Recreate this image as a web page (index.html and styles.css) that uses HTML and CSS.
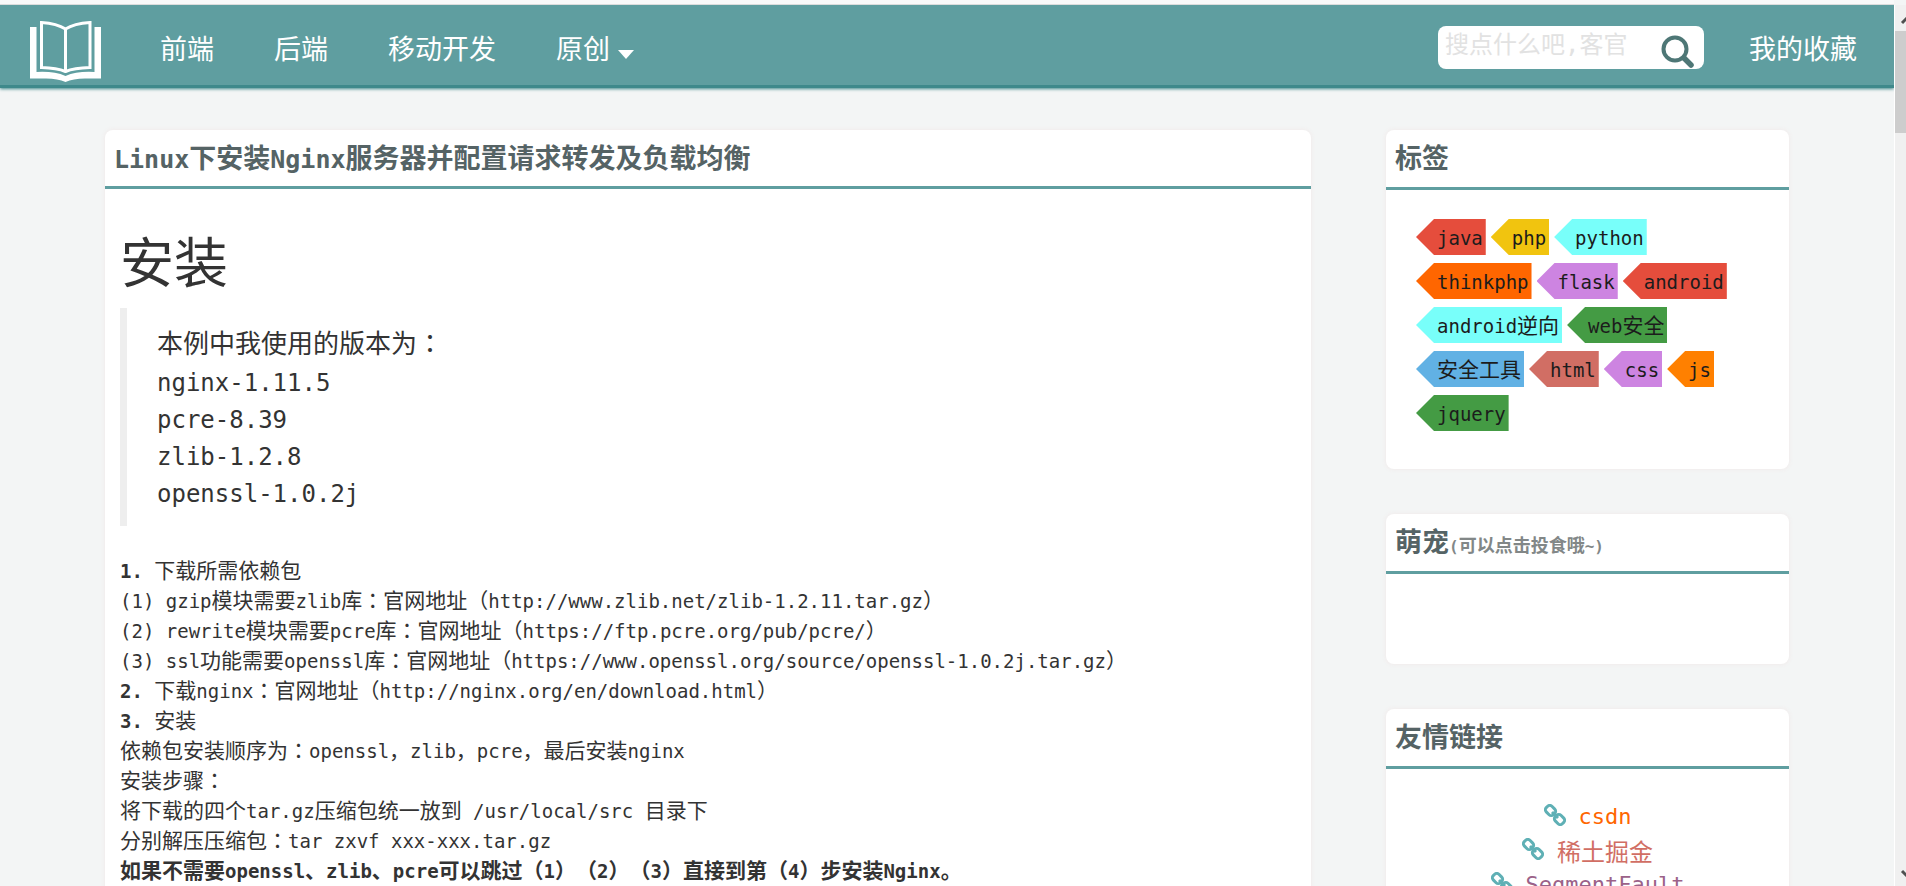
FILE: index.html
```html
<!DOCTYPE html>
<html lang="zh-CN">
<head>
<meta charset="utf-8">
<title>Linux下安装Nginx服务器并配置请求转发及负载均衡</title>
<link rel="stylesheet" href="styles.css">
</head>
<body>
<div class="page">
  <header class="topbar">
    <a class="logo" href="#" aria-label="首页">
      <svg viewBox="0 0 71 61" width="71" height="61" fill="none" stroke="#fff">
        <path d="M0 6H6.500V51Q24 50 35.500 55Q47 50 64.500 51V6H71V57.500H55Q43 57.500 35.500 61Q28 57.500 16 57.500H0Z" fill="#fff" stroke="none"/>
        <path d="M11.500 1.500Q27 2.500 35.500 8Q44 2.500 60 1.500V46.500Q44 47 35.500 50.500Q27 47 11.500 46.500ZM35.500 8V50" stroke-width="3"/>
      </svg>
    </a>
    <nav class="nav">
      <a href="#">前端</a>
      <a href="#">后端</a>
      <a href="#">移动开发</a>
      <a href="#" class="drop">原创<span class="caret"></span></a>
    </nav>
    <form class="search">
      <input type="text" aria-label="搜索" placeholder="搜点什么吧,客官">
      <button type="button" aria-label="搜索">
        <svg viewBox="0 0 34 34" width="34" height="34" fill="none" stroke="#4e7776" stroke-linecap="round"><circle cx="14" cy="14" r="11.500" stroke-width="4"/><path d="M23.500 23.500L30 30" stroke-width="5.500"/></svg>
      </button>
    </form>
    <a class="fav" href="#">我的收藏</a>
  </header>

  <div class="layout">
    <main class="card article">
      <h2 class="card-title"><span class="en">Linux</span>下安装<span class="en">Nginx</span>服务器并配置请求转发及负载均衡</h2>
      <div class="content">
        <h1>安装</h1>
        <blockquote>
          <p class="lead">本例中我使用的版本为<span class="pc">：</span></p>
          <p><span class="en">nginx-1.11.5</span></p>
          <p><span class="en">pcre-8.39</span></p>
          <p><span class="en">zlib-1.2.8</span></p>
          <p><span class="en">openssl-1.0.2j</span></p>
        </blockquote>
        <div class="steps">
          <p><b class="en">1. </b>下载所需依赖包</p>
          <p><span class="en">(1) gzip</span>模块需要<span class="en">zlib</span>库<span class="pc">：</span>官网地址<span class="pc">（</span><span class="en">http://www.zlib.net/zlib-1.2.11.tar.gz</span><span class="pc">）</span></p>
          <p><span class="en">(2) rewrite</span>模块需要<span class="en">pcre</span>库<span class="pc">：</span>官网地址<span class="pc">（</span><span class="en">https://ftp.pcre.org/pub/pcre/</span><span class="pc">）</span></p>
          <p><span class="en">(3) ssl</span>功能需要<span class="en">openssl</span>库<span class="pc">：</span>官网地址<span class="pc">（</span><span class="en">https://www.openssl.org/source/openssl-1.0.2j.tar.gz</span><span class="pc">）</span></p>
          <p><b class="en">2. </b>下载<span class="en">nginx</span><span class="pc">：</span>官网地址<span class="pc">（</span><span class="en">http://nginx.org/en/download.html</span><span class="pc">）</span></p>
          <p><b class="en">3. </b>安装</p>
          <p>依赖包安装顺序为<span class="pc">：</span><span class="en">openssl</span>，<span class="en">zlib</span>，<span class="en">pcre</span>，最后安装<span class="en">nginx</span></p>
          <p>安装步骤<span class="pc">：</span></p>
          <p>将下载的四个<span class="en">tar.gz</span>压缩包统一放到<span class="en"> /usr/local/src </span>目录下</p>
          <p>分别解压压缩包<span class="pc">：</span><span class="en">tar zxvf xxx-xxx.tar.gz</span></p>
          <p><strong>如果不需要<span class="en">openssl</span>、<span class="en">zlib</span>、<span class="en">pcre</span>可以跳过（<span class="en">1</span>）（<span class="en">2</span>）（<span class="en">3</span>）直接到第（<span class="en">4</span>）步安装<span class="en">Nginx</span>。</strong></p>
        </div>
      </div>
    </main>

    <aside class="sidebar">
      <section class="card">
        <h2 class="card-title">标签</h2>
        <div class="tags">
          <a href="#" class="tag red"><span class="en">java</span></a>
          <a href="#" class="tag yellow"><span class="en">php</span></a>
          <a href="#" class="tag cyan"><span class="en">python</span></a>
          <a href="#" class="tag orange"><span class="en">thinkphp</span></a>
          <a href="#" class="tag violet"><span class="en">flask</span></a>
          <a href="#" class="tag red"><span class="en">android</span></a>
          <a href="#" class="tag cyan"><span class="en">android</span>逆向</a>
          <a href="#" class="tag green"><span class="en">web</span>安全</a>
          <a href="#" class="tag blue">安全工具</a>
          <a href="#" class="tag rose"><span class="en">html</span></a>
          <a href="#" class="tag violet"><span class="en">css</span></a>
          <a href="#" class="tag amber"><span class="en">js</span></a>
          <a href="#" class="tag green"><span class="en">jquery</span></a>
        </div>
      </section>
      <section class="card">
        <h2 class="card-title">萌宠<small><span class="en">(</span>可以点击投食哦<span class="en">~)</span></small></h2>
        <div class="pet"></div>
      </section>
      <section class="card">
        <h2 class="card-title">友情链接</h2>
        <div class="links">
          <a href="#" class="c1"><svg class="chain" viewBox="0 0 22 22"><use href="#chain"/></svg><span class="en">csdn</span></a>
          <a href="#" class="c2"><svg class="chain" viewBox="0 0 22 22"><use href="#chain"/></svg>稀土掘金</a>
          <a href="#" class="c3"><svg class="chain" viewBox="0 0 22 22"><use href="#chain"/></svg><span class="en">SegmentFault</span></a>
        </div>
      </section>
    </aside>
  </div>
</div>
<div class="scrollbar" aria-hidden="true">
  <svg viewBox="0 0 11 26" width="11" height="26" fill="none" stroke="#505050" stroke-width="3"><path d="M7 18L12 13"/></svg>
  <div class="thumb"></div>
  <svg class="down" viewBox="0 0 11 26" width="11" height="26" fill="none" stroke="#505050" stroke-width="3"><path d="M7 11L12 16"/></svg>
</div>
<svg class="defs" aria-hidden="true"><symbol id="chain" viewBox="0 0 22 22"><g fill="none" stroke="#5fb0b5" stroke-width="3"><rect x="-5" y="-4" width="10" height="8" rx="3" transform="translate(6.500 6.500) rotate(45)"/><rect x="-5" y="-4" width="10" height="8" rx="3" transform="translate(15.500 15.500) rotate(45)"/><path d="M8 8L14 14"/></g></symbol></svg>
</body>
</html>
```

FILE: styles.css
```css
* { box-sizing: border-box; }
html { height: 100%; }
body {
  margin: 0;
  height: 100%;
  display: flex;
  overflow: hidden;
  background: #f3f5f5;
  color: #333;
  font-family: "Noto Sans CJK SC", sans-serif;
  font-size: 21px;
  line-height: 30px;
  text-spacing-trim: space-all;
}
a { text-decoration: none; color: inherit; }
h1, h2, p, blockquote { margin: 0; font-weight: normal; }
.en { font-family: "DejaVu Sans Mono", monospace; font-size: 19px; line-height: 1; white-space: pre-wrap; }
.pc { font-family: "Noto Sans CJK TC", sans-serif; font-feature-settings: "locl" 0; line-height: 1; }
.defs { position: absolute; width: 0; height: 0; }

.page { flex: 1; min-width: 0; height: 100%; overflow: hidden; border-top: 4px solid #f9f9f9; }

.topbar {
  display: flex;
  align-items: center;
  height: 84px;
  padding: 0 37px 0 30px;
  background: #5f9ea0;
  border-top: 1px solid #dcdcdc;
  border-bottom: 3px solid #3e898b;
  box-shadow: 0 1px 3px #3e898b;
  color: #fff;
  font-size: 27px;
  line-height: 40px;
}
.logo { display: flex; height: 80px; align-items: flex-start; padding-top: 16px; }
.nav { display: flex; gap: 60px; margin-left: 59px; padding-top: 6px; }
.drop { display: flex; align-items: center; gap: 8px; }
.caret { border: 8px solid transparent; border-top: 9px solid #fff; border-bottom: 0; margin-top: 13px; }
.search {
  display: flex;
  align-items: center;
  width: 266px;
  height: 43px;
  margin: 4px 45px 0 auto;
  padding: 0 9px 0 7px;
  background: #fff;
  border-radius: 8px;
}
.search input {
  flex: 1;
  min-width: 0;
  padding: 0 0 4px;
  border: 0;
  outline: 0;
  background: none;
  font: 24px "DejaVu Sans Mono", "Noto Sans CJK SC", sans-serif;
}
.search input::placeholder { color: #e2e2e2; opacity: 1; }
.search button { display: flex; padding: 9px 0 0; border: 0; background: none; }
.fav { padding-top: 6px; }

.layout { display: flex; gap: 75px; padding: 42px 105px 0; }
.article { flex: 3; min-height: 900px; }
.sidebar { flex: 0 0 403px; display: flex; flex-direction: column; gap: 45px; }
.card { background: #fff; border-radius: 8px; box-shadow: 0 0 5px #f0e8e8; }
.card-title {
  padding: 7px 9px 9px;
  border-bottom: 3px solid #5f9ea0;
  color: #556365;
  font-size: 27px;
  font-weight: bold;
  line-height: 40px;
}
.sidebar .card-title { padding-bottom: 10px; }
.card-title .en { font-size: 25px; }
.card-title small { color: #828787; font-size: 18px; line-height: 1; }
.card-title small .en { font-size: 16px; }

.content { padding: 36px 15px; }
.content h1 { font-size: 54px; line-height: 70px; margin-bottom: 13px; }
blockquote { padding: 14px 30px 17px; border-left: 7px solid #eee; font-size: 26px; line-height: 37px; }
blockquote .lead { line-height: 39px; }
blockquote .en { font-size: 24px; }
.steps { margin-top: 28px; }

.tags { display: flex; flex-wrap: wrap; gap: 8px 5px; padding: 29px 30px 38px; }
.tag {
  padding: 2px 3px 4px 21px;
  color: #1c1c1c;
  clip-path: polygon(0 50%, 18px 0, 100% 0, 100% 100%, 18px 100%);
}
.red { background: #e54d3c; }
.yellow { background: #f1c40f; }
.cyan { background: #78fffa; }
.orange { background: #f60; }
.violet { background: #cd84e1; }
.green { background: #449b44; }
.blue { background: #61b1e4; }
.rose { background: #d16e64; }
.amber { background: #ff8000; }

.pet { height: 90px; }
.links { display: flex; flex-direction: column; align-items: center; padding: 31px 30px; font-size: 24px; line-height: 34px; }
.links a { display: flex; align-items: center; gap: 13px; height: 34px; }
.links .en { font-size: 22px; }
.chain { width: 22px; height: 22px; margin-bottom: 5px; }
.c1 { color: #f60; }
.c2 { color: #d16e64; }
.c3 { color: #9b6289; }

.scrollbar { flex: 0 0 12px; display: flex; flex-direction: column; margin-top: 5px; border-left: 1px solid #fff; background: #f0f0f0; }
.scrollbar svg { flex: none; }
.thumb { height: 102px; background: #cdcdcd; }
.down { margin-top: auto; }
```
